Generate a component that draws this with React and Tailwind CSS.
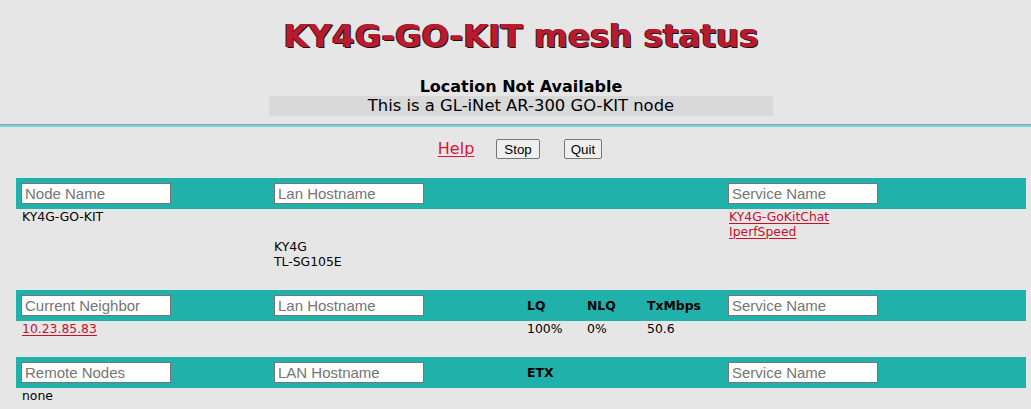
import React from 'react';

const verdana = "font-['DejaVu_Sans',Verdana,sans-serif]";

function Field({ placeholder }) {
  return (
    <input
      type="text"
      placeholder={placeholder}
      className="w-[150px] h-[21px] border border-[#767676] bg-white px-[3px] text-[15px] font-['Liberation_Sans',Arial,sans-serif] text-black placeholder:text-[#757575] outline-none"
    />
  );
}

function HeaderRow({ first, second, stats = [], }) {
  return (
    <div className="flex items-center h-[31px] bg-[#20b2aa] ml-4 mr-[5px]">
      <div className="w-[253px] pl-[5px]"><Field placeholder={first} /></div>
      <div className="w-[253px] pl-[5px]"><Field placeholder={second} /></div>
      <div className="w-[60px] pl-[5px] font-bold">{stats[0]}</div>
      <div className="w-[60px] pl-[5px] font-bold">{stats[1]}</div>
      <div className="w-[81px] pl-[5px] font-bold">{stats[2]}</div>
      <div className="pl-[5px]"><Field placeholder="Service Name" /></div>
    </div>
  );
}

const link = "text-[#c8102e] underline decoration-1 underline-offset-2";

export default function App() {
  return (
    <div className={`min-h-[409px] w-[1031px] bg-[#e6e6e6] text-black text-[12.4px] leading-[15px] ${verdana}`}>
      {/* title block */}
      <div className="flex flex-col items-center pt-[14px] pl-[11px]">
        <h1 className="text-[32.5px] leading-[44px] font-bold text-[#bb1a2e] [text-shadow:1px_1px_0_#111,-1px_0_0_#4a2030]">
          KY4G-GO-KIT mesh status
        </h1>
        <div className="mt-[19px] text-[16px] leading-[19px] font-bold">Location Not Available</div>
        <div className="w-[504px] h-[20px] bg-[#d9d9d9] text-center text-[16.4px] leading-[20px]">
          This is a GL-iNet AR-300 GO-KIT node
        </div>
      </div>
      <div className="mt-[8px] border-t border-[#9a9a9a] h-[3px] bg-[#66dede]" />

      {/* controls */}
      <div className="flex items-center justify-center h-[32px] mt-[6px] pl-[9px]">
        <a href="#" className="text-[16px] leading-[20px] text-[#dc143c] underline decoration-1 underline-offset-2 mr-[22px]">Help</a>
        <button className="h-[20px] px-[7px] border border-[#767676] rounded-[2px] bg-[#efefef] text-[13.33px] font-['Liberation_Sans',Arial,sans-serif] mr-[24px]">Stop</button>
        <button className="h-[20px] px-[6px] border border-[#767676] rounded-[2px] bg-[#efefef] text-[13.33px] font-['Liberation_Sans',Arial,sans-serif]">Quit</button>
      </div>

      <div className="pt-[13px]">
        <HeaderRow first="Node Name" second="Lan Hostname" />
        <div className="flex ml-4">
          <div className="w-[253px] pl-[6px]">KY4G-GO-KIT</div>
          <div className="w-[254px] pl-[5px]">
            <div className="h-[30px]" />
            <div>KY4G</div>
            <div>TL-SG105E</div>
          </div>
          <div className="w-[201px]" />
          <div className="pl-[5px] flex flex-col items-start">
            <a href="#" className={link}>KY4G-GoKitChat</a>
            <a href="#" className={link}>IperfSpeed</a>
          </div>
        </div>
        <div className="h-[21px]" />

        <HeaderRow first="Current Neighbor" second="Lan Hostname" stats={['LQ', 'NLQ', 'TxMbps']} />
        <div className="flex ml-4 h-[15px]">
          <div className="w-[253px] pl-[6px]"><a href="#" className={link}>10.23.85.83</a></div>
          <div className="w-[253px]" />
          <div className="w-[60px] pl-[5px]">100%</div>
          <div className="w-[60px] pl-[5px]">0%</div>
          <div className="w-[81px] pl-[5px]">50.6</div>
        </div>
        <div className="h-[21px]" />

        <HeaderRow first="Remote Nodes" second="LAN Hostname" stats={['ETX']} />
        <div className="ml-4 pl-[6px] h-[15px]">none</div>
      </div>
    </div>
  );
}
